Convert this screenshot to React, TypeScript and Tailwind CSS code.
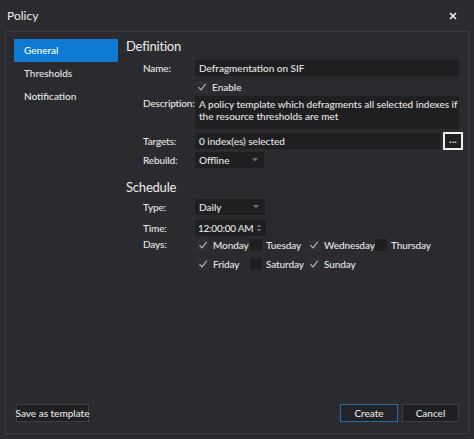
import React from 'react';

const Check = ({ checked }: { checked: boolean }) => (
  <span
    className={`flex h-[12px] w-[12px] shrink-0 items-center justify-center ${
      checked ? 'bg-[#2e2e33]' : 'bg-[#1e1e21]'
    }`}
  >
    {checked && (
      <svg width="10" height="10" viewBox="0 0 10 10">
        <path d="M1.5 5.2 L4 7.8 L8.7 1.8" fill="none" stroke="#b8b8bc" strokeWidth="1.1" />
      </svg>
    )}
  </span>
);

const Day = ({ label, checked, w }: { label: string; checked: boolean; w: string }) => (
  <div className={`flex items-center gap-[4px] whitespace-nowrap ${w}`}>
    <Check checked={checked} />
    <span className="tracking-[-0.1px]">{label}</span>
  </div>
);

const Select = ({ value, w }: { value: string; w: string }) => (
  <div className={`flex h-[16px] items-center justify-between bg-[#1f1f22] pl-[4px] pr-[6px] ${w}`}>
    <span>{value}</span>
    <svg width="6" height="4" viewBox="0 0 6 4">
      <path d="M0 0 L6 0 L3 3.5 Z" fill="#6b6b70" />
    </svg>
  </div>
);

const Row = ({ label, children, className = '' }: { label: string; children: React.ReactNode; className?: string }) => (
  <div className={`flex ${className}`}>
    <span className="w-[69px] shrink-0 whitespace-nowrap pl-[17px] tracking-[-0.15px]">{label}</span>
    {children}
  </div>
);

export default function App() {
  return (
    <div
      className="flex h-[439px] w-[474px] flex-col bg-[#2b2b2f] text-[10px] font-medium text-[#e6e6e8]"
      style={{ fontFamily: 'Lato, "Noto Sans", sans-serif' }}
    >
      {/* Title bar */}
      <div className="flex h-[31px] shrink-0 items-center justify-between pl-[7px] pr-[17px]">
        <span className="text-[12px] font-normal text-[#f0f0f0]">Policy</span>
        <svg width="8" height="8" viewBox="0 0 8 8">
          <path d="M1 1 L7 7 M7 1 L1 7" stroke="#f2f2f2" strokeWidth="1.6" />
        </svg>
      </div>

      <div className="mx-[5px] mb-[5px] flex flex-1 flex-col border border-[#3a3a3f]">
        <div className="flex flex-1">
          {/* Sidebar */}
          <div className="w-[112px] shrink-0 pl-[8px] pt-[7px]">
            <div className="flex h-[23px] items-center bg-[#0e7ad4] pl-[10px] text-white">General</div>
            <div className="flex h-[23px] items-center pl-[10px]">Thresholds</div>
            <div className="flex h-[23px] items-center pl-[10px]">Notification</div>
          </div>

          {/* Form */}
          <div className="flex-1 pl-[8px] pr-[9px]">
            <div className="mt-[6px] flex h-[18px] items-center text-[13px] font-normal tracking-[-0.2px] text-[#eeeeee]">
              Definition
            </div>
            <div className="mt-[4px] flex flex-col">
              <Row label="Name:" className="h-[16px] items-center">
                <div className="flex h-[16px] flex-1 items-center bg-[#1f1f22] pl-[4px]">Defragmentation on SIF</div>
              </Row>
              <Row label="" className="mt-[3px] h-[16px] items-center">
                <div className="flex items-center gap-[4px] pl-[1px]">
                  <Check checked />
                  <span>Enable</span>
                </div>
              </Row>
              <Row label="Description:" className="mt-[1px]">
                <div className="h-[33px] flex-1 bg-[#1f1f22] pl-[4px] pt-[2px] leading-[12px]">
                  A policy template which defragments all selected indexes if the resource thresholds are met
                </div>
              </Row>
              <Row label="Targets:" className="mt-[3px] h-[18px] items-center">
                <div className="flex flex-1 items-center">
                  <div className="flex h-[16px] flex-1 items-center bg-[#1f1f22] pl-[4px]">0 index(es) selected</div>
                  <div className="ml-[3px] mr-[-4px] flex h-[18px] w-[20px] items-center justify-center border-2 border-[#f0f0f0] bg-[#1f1f22] text-[10px] leading-none">
                    ···
                  </div>
                </div>
              </Row>
              <Row label="Rebuild:" className="mt-[2px] h-[16px] items-center">
                <Select value="Offline" w="w-[69px]" />
              </Row>
            </div>

            <div className="mt-[11px] flex h-[18px] items-center text-[13px] font-normal tracking-[-0.2px] text-[#eeeeee]">
              Schedule
            </div>
            <div className="mt-[2px] flex flex-col">
              <Row label="Type:" className="h-[16px] items-center">
                <Select value="Daily" w="w-[70px]" />
              </Row>
              <Row label="Time:" className="mt-[5px] h-[16px] items-center">
                <div className="flex h-[16px] w-[71px] items-center justify-between whitespace-nowrap bg-[#1f1f22] pl-[3px] pr-[4px]">
                  <span className="tracking-[-0.25px]">12:00:00 AM</span>
                  <svg width="6" height="10" viewBox="0 0 6 10">
                    <path d="M0.5 4 L5.5 4 L3 1.5 Z M0.5 6 L5.5 6 L3 8.5 Z" fill="#6b6b70" />
                  </svg>
                </div>
              </Row>
              <Row label="Days:" className="mt-[1px] items-start">
                <div className="flex flex-col gap-[3px] pl-[2px]">
                  <div className="flex h-[16px] items-center">
                    <Day label="Monday" checked w="w-[53px]" />
                    <Day label="Tuesday" checked={false} w="w-[58px]" />
                    <Day label="Wednesday" checked w="w-[67px]" />
                    <Day label="Thursday" checked={false} w="w-[70px]" />
                  </div>
                  <div className="flex h-[16px] items-center">
                    <Day label="Friday" checked w="w-[53px]" />
                    <Day label="Saturday" checked={false} w="w-[58px]" />
                    <Day label="Sunday" checked w="w-[67px]" />
                  </div>
                </div>
              </Row>
            </div>
          </div>
        </div>

        {/* Bottom buttons */}
        <div className="flex items-center justify-between pb-[11px] pl-[10px] pr-[9px]">
          <button className="flex h-[18px] w-[73px] items-center justify-center whitespace-nowrap border border-[#3d3d42] bg-[#1f1f22] text-[10px]">
            Save as template
          </button>
          <div className="flex gap-[4px]">
            <button className="flex h-[18px] w-[58px] items-center justify-center border border-[#1f6fad] bg-[#232327] text-[10px]">
              Create
            </button>
            <button className="flex h-[18px] w-[57px] items-center justify-center border border-[#3d3d42] bg-[#1f1f22] text-[10px]">
              Cancel
            </button>
          </div>
        </div>
      </div>
    </div>
  );
}
